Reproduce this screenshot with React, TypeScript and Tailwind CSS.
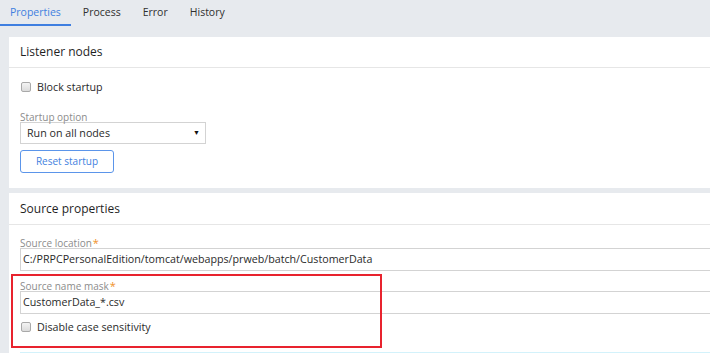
import React from "react";

const Checkbox = () => (
  <span className="inline-block w-[10px] h-[10px] rounded-[2px] border border-[#a9a9a9] bg-gradient-to-b from-[#f4f4f4] to-[#dcdcdc]" />
);

const Label = ({ text, required }: { text: string; required?: boolean }) => (
  <div className="h-[13px] leading-[12px] pt-[2px] text-[10px] text-[#8c8c8c] flex items-center">
    <span>{text}</span>
    {required && <span className="text-[#f0912a] text-[11px] ml-[1px] leading-[12px]">*</span>}
  </div>
);

export default function App() {
  const tabs = ["Properties", "Process", "Error", "History"];
  return (
    <div
      className="w-[710px] h-[353px] overflow-hidden bg-[#e7eaee] relative"
      style={{ fontFamily: '"Open Sans", "Liberation Sans", sans-serif' }}
    >
      {/* Tabs */}
      <div className="flex h-[26px] gap-[2px]">
        {tabs.map((t, i) => (
          <div
            key={t}
            className={
              i === 0
                ? "px-[10px] h-[26px] pt-[2px] flex items-center text-[10.5px] text-[#3f7fe0] border-b-2 border-[#3f7fe0]"
                : "px-[10px] h-[26px] pt-[2px] flex items-center text-[10.5px] text-[#2f2f2f] border-b-2 border-transparent"
            }
          >
            {t}
          </div>
        ))}
      </div>

      {/* Card 1 */}
      <div className="ml-[9px] mt-[11px] bg-white">
        <div className="h-[31px] border-b border-[#e6e6e6] flex items-center pl-[11px] text-[12px] text-[#1f1f1f]">
          Listener nodes
        </div>
        <div className="pl-[11px] pt-[10px] pb-[15px]">
          <div className="h-[18px] flex items-center gap-[6px] text-[10.7px] text-[#2a2a2a]">
            <span className="ml-[1px] flex"><Checkbox /></span>
            <span>Block startup</span>
          </div>
          <div className="mt-[13px]">
            <Label text="Startup option" />
          </div>
          <div className="w-[186px] h-[22px] border border-[#d3d3d3] flex items-center justify-between pl-[6px] pr-[5px] text-[10.7px] text-[#2a2a2a]">
            <span>Run on all nodes</span>
            <span className="text-[7px] text-[#111]">▼</span>
          </div>
          <div className="mt-[6px] w-[94px] h-[23px] border border-[#5b95ea] rounded-[3px] flex items-center justify-center text-[10px] text-[#3f7fe0]">
            Reset startup
          </div>
        </div>
      </div>

      {/* Card 2 */}
      <div className="ml-[9px] mt-[5px] bg-white">
        <div className="h-[32px] border-b border-[#e6e6e6] flex items-center pl-[11px] text-[12px] text-[#1f1f1f]">
          Source properties
        </div>
        <div className="pl-[11px] pt-[10px]">
          <Label text="Source location" required />
          <div className="w-[720px] h-[23px] border border-[#d3d3d3] flex items-center pl-[2px] text-[10.7px] text-[#2a2a2a]">
            C:/PRPCPersonalEdition/tomcat/webapps/prweb/batch/CustomerData
          </div>
          <div className="mt-[7px]">
            <Label text="Source name mask" required />
          </div>
          <div className="w-[720px] h-[23px] border border-[#d3d3d3] flex items-center pl-[2px] text-[10.7px] text-[#2a2a2a]">
            CustomerData_*.csv
          </div>
          <div className="mt-[4px] h-[18px] flex items-center gap-[6px] text-[10.7px] text-[#2a2a2a]">
            <span className="ml-[1px] flex"><Checkbox /></span>
            <span>Disable case sensitivity</span>
          </div>
          <div className="mt-[16px] h-[4px] bg-[#d3f2fb]" />
        </div>
      </div>

      {/* Annotation box */}
      <div className="absolute left-[11px] top-[274px] w-[371px] h-[74px] border-2 border-[#e8232e]" />
    </div>
  );
}
